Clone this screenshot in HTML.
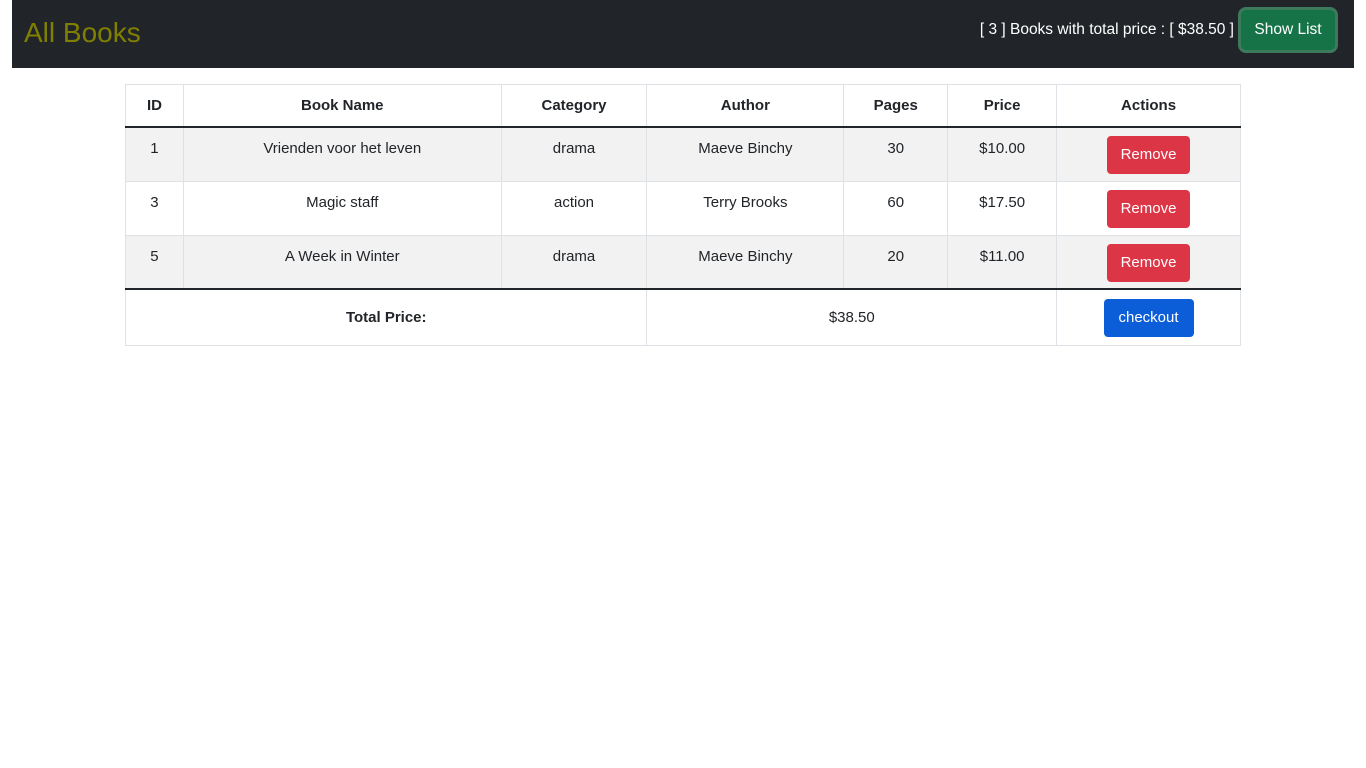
<!DOCTYPE html>
<html><head><style>
body{margin:0;background:#fff;font-family:"Liberation Sans",sans-serif;font-size:15px;color:#212529;}
.nav{position:absolute;left:12px;top:0;width:1342px;height:68px;background:#212529;}
.title{position:absolute;left:12px;top:17px;font-size:28px;color:#808000;}
.info{position:absolute;right:120px;top:21px;color:#fff;font-size:15.5px;}
.btn{position:absolute;left:1229px;top:10px;width:94px;height:40px;background:#157347;color:#fff;border-radius:5px;box-shadow:0 0 0 3px #3c7a5b;text-align:center;line-height:40px;font-size:15.5px;}
table{position:absolute;left:125px;top:84px;border-collapse:collapse;width:1116px;}
td,th{border:1px solid #dee2e6;text-align:center;padding:0;font-size:15px;}
th{height:41px;font-weight:bold;}
thead tr{border-bottom:2px solid #212529;}
tbody td{height:54px;vertical-align:top;padding-top:12px;box-sizing:border-box;}
tbody tr:nth-child(odd){background:#f2f2f2;}
tbody tr:last-child{border-bottom:2px solid #212529;}
tfoot td{height:55px;}
.rm{display:inline-block;width:83px;height:38px;line-height:38px;background:#dc3545;color:#fff;border-radius:4px;margin-top:-4px;}
.co{display:inline-block;width:90px;height:38px;line-height:38px;background:#0b5ed7;color:#fff;border-radius:4px;}
</style></head><body>
<div class="nav"><div class="title">All Books</div><div class="info">[ 3 ] Books with total price : [ $38.50 ]</div><div class="btn">Show List</div></div>
<table>
<colgroup><col style="width:58px"><col style="width:318px"><col style="width:146px"><col style="width:197px"><col style="width:104px"><col style="width:109px"><col style="width:184px"></colgroup>
<thead><tr><th>ID</th><th>Book Name</th><th>Category</th><th>Author</th><th>Pages</th><th>Price</th><th>Actions</th></tr></thead>
<tbody>
<tr><td>1</td><td>Vrienden voor het leven</td><td>drama</td><td>Maeve Binchy</td><td>30</td><td>$10.00</td><td><span class="rm">Remove</span></td></tr>
<tr><td>3</td><td>Magic staff</td><td>action</td><td>Terry Brooks</td><td>60</td><td>$17.50</td><td><span class="rm">Remove</span></td></tr>
<tr><td>5</td><td>A Week in Winter</td><td>drama</td><td>Maeve Binchy</td><td>20</td><td>$11.00</td><td><span class="rm">Remove</span></td></tr>
</tbody>
<tfoot><tr><td colspan="3"><b>Total Price:</b></td><td colspan="3">$38.50</td><td><span class="co">checkout</span></td></tr></tfoot>
</table>
</body></html>
